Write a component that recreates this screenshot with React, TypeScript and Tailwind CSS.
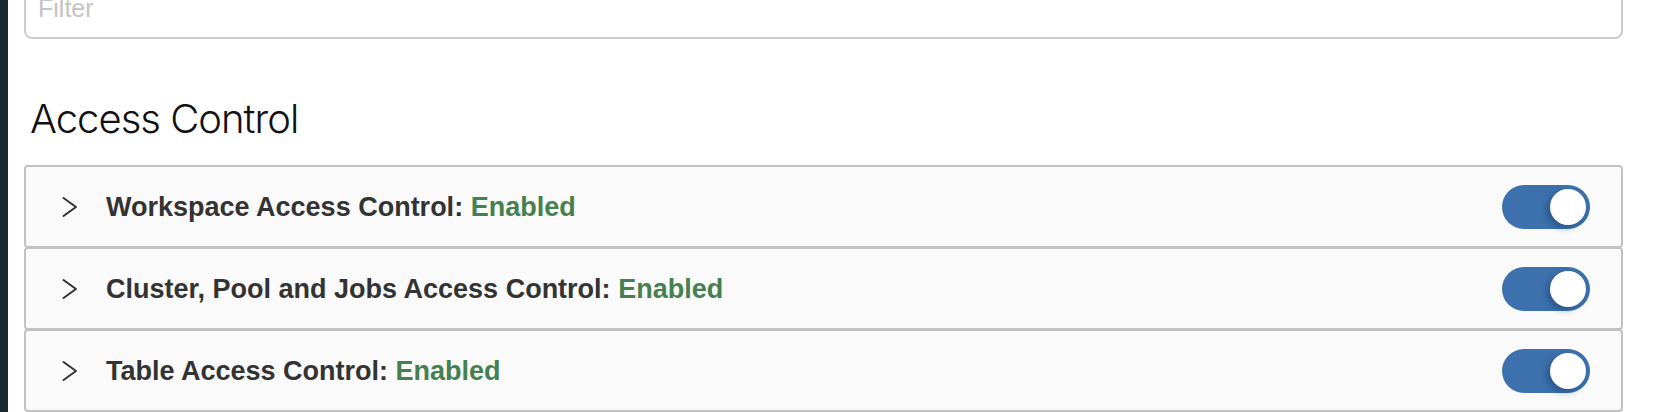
import React from "react";

const rows = [
  "Workspace Access Control:",
  "Cluster, Pool and Jobs Access Control:",
  "Table Access Control:",
];

function Chevron() {
  return (
    <svg width="16" height="22" viewBox="0 0 16 22" className="shrink-0">
      <polyline
        points="1.5,2 14,11 1.5,20"
        fill="none"
        stroke="#333333"
        strokeWidth="2"
        strokeLinecap="round"
        strokeLinejoin="round"
      />
    </svg>
  );
}

function Toggle() {
  return (
    <div className="ml-auto flex h-[44px] w-[88px] shrink-0 items-center justify-end rounded-full bg-[#3c71ae] pr-[4px]">
      <div className="h-[36px] w-[36px] rounded-full bg-white shadow-[-3px_3px_6px_rgba(20,50,90,0.45)]" />
    </div>
  );
}

export default function App() {
  return (
    <div className="flex h-[412px] w-[1658px] overflow-hidden bg-white font-['Liberation_Sans',Arial,sans-serif]">
      <div className="w-[8px] shrink-0 bg-[#1a2831]" />
      <div className="flex w-[1615px] flex-col pl-[16px]">
        <div className="-mt-[21px] flex h-[60px] items-end rounded-[8px] border-2 border-[#cccccc] pb-[16px] pl-[12px]">
          <span className="text-[25px] leading-[25px] text-[#c4c4c4]">Filter</span>
        </div>
        <h2 className="mt-[60px] ml-[6px] font-['Inter',sans-serif] text-[40px] font-light leading-[40px] tracking-[-1px] text-[#111111]">
          Access Control
        </h2>
        <div className="mt-[26px] flex flex-col">
          {rows.map((label, i) => (
            <div
              key={label}
              className={`flex h-[83px] shrink-0 items-center rounded-[4px] border-2 border-[#c2c2c2] bg-[#fafafa] pl-[36px] pr-[31px] ${i > 0 ? "-mt-[1px]" : ""}`}
            >
              <Chevron />
              <div className="ml-[28px] text-[27px] leading-[30px] text-[#333333]">
                <span className="font-bold">{label}</span>{" "}
                <span className="font-bold text-[#45804f]">Enabled</span>
              </div>
              <Toggle />
            </div>
          ))}
        </div>
      </div>
    </div>
  );
}
